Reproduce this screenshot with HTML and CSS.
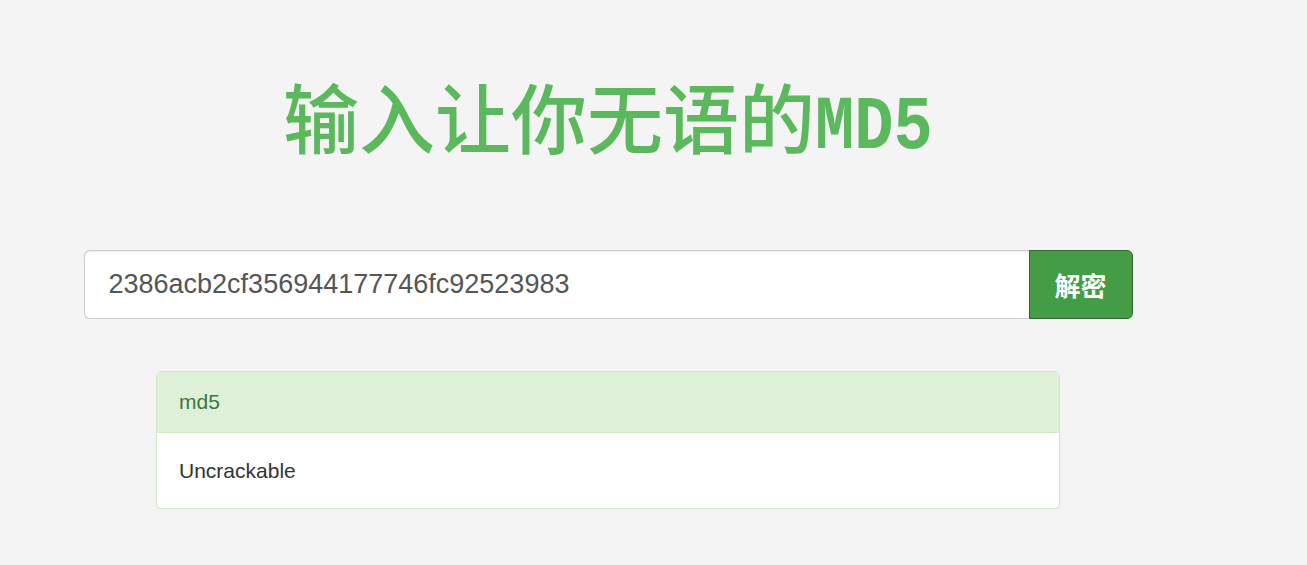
FILE: index.html
```html
<!DOCTYPE html>
<html lang="zh-CN">
  <head>
    <meta charset="UTF-8" />
    <meta name="viewport" content="width=device-width, initial-scale=1.0" />
    <title>MD5</title>
    <link rel="stylesheet" href="styles.css">
  </head>
  <body>
    <div class="container">
      <div class="main">
        <h1 class="title">输入让你无语的<span class="latin">MD5</span></h1>

        <form class="input-group" onsubmit="return false">
          <input class="hash-input" type="text" value="2386acb2cf356944177746fc92523983" />
          <button class="btn-decrypt" type="submit">解密</button>
        </form>

        <div class="panel">
          <div class="panel-heading">md5</div>
          <div class="panel-body">Uncrackable</div>
        </div>
      </div>
    </div>
  </body>
</html>
```

FILE: styles.css
```css
body {
  margin: 0;
  background-color: #f4f4f4;
  font-family: "Liberation Sans", Arial, "Noto Sans CJK SC", sans-serif;
  color: #333;
}
.container {
  width: 1140px;
  margin: 0 auto;
  padding: 0 15px;
}
.main {
  width: 1049px;
  padding-top: 73px;
}
.title {
  margin: 0 0 79px;
  text-align: center;
  font-family: "Noto Sans CJK SC", sans-serif;
  font-size: 76px;
  font-weight: 500;
  line-height: 85px;
  color: #5cb85c;
}
.title .latin {
  display: inline-block;
  font-family: "Liberation Mono", monospace;
  font-weight: 700;
  transform: scaleX(0.86);
  transform-origin: left center;
  margin-right: -19px;
}
.input-group {
  display: flex;
  height: 69px;
  margin: 0 0 52px;
}
.hash-input {
  flex: 1;
  min-width: 0;
  box-sizing: border-box;
  height: 69px;
  margin: 0;
  padding: 0 24px;
  border: 1px solid #ccc;
  border-right: 0;
  border-radius: 6px 0 0 6px;
  background: #fff;
  box-shadow: inset 0 1px 1px rgba(0, 0, 0, 0.075);
  font-family: "Liberation Sans", Arial, sans-serif;
  font-size: 27px;
  color: #555;
  outline: none;
}
.btn-decrypt {
  width: 104px;
  height: 69px;
  margin: 0;
  border: 1px solid #2d672d;
  border-radius: 0 6px 6px 0;
  background-color: #449d44;
  color: #fff;
  font-family: "Noto Sans CJK SC", sans-serif;
  font-size: 26px;
  font-weight: 700;
  cursor: pointer;
}
.panel {
  width: 904px;
  margin: 0 auto;
  box-sizing: border-box;
  border: 1px solid #d6e9c6;
  border-radius: 6px;
  background: #fff;
  box-shadow: 0 1px 2px rgba(0, 0, 0, 0.08);
  overflow: hidden;
}
.panel-heading {
  height: 61px;
  box-sizing: border-box;
  padding: 0 22px;
  display: flex;
  align-items: center;
  background-color: #dff0d8;
  border-bottom: 1px solid #d6e9c6;
  color: #3c763d;
  font-size: 21px;
}
.panel-body {
  height: 75px;
  box-sizing: border-box;
  padding: 0 22px;
  display: flex;
  align-items: center;
  font-size: 21px;
  color: #333;
}
```
